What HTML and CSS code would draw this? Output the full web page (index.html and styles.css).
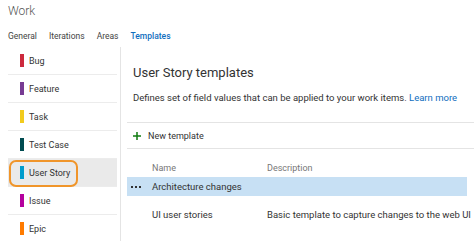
FILE: index.html
```html
<!DOCTYPE html>
<html lang="en">

<head>
    <meta charset="utf8">
    <title>Work - Templates</title>
    <link rel="stylesheet" href="styles.css">
</head>

<body>
    <header class="page-header">
        <h1 class="title">Work</h1>
        <nav class="tabs">
            <a class="tab">General</a>
            <a class="tab">Iterations</a>
            <a class="tab">Areas</a>
            <a class="tab active">Templates</a>
        </nav>
    </header>

    <div class="layout">
        <ul class="types">
            <li class="type"><span class="bar bug"></span>Bug</li>
            <li class="type"><span class="bar feature"></span>Feature</li>
            <li class="type"><span class="bar task"></span>Task</li>
            <li class="type"><span class="bar testcase"></span>Test Case</li>
            <li class="type selected"><span class="bar story"></span>User Story<span class="callout"></span></li>
            <li class="type"><span class="bar issue"></span>Issue</li>
            <li class="type"><span class="bar epic"></span>Epic</li>
        </ul>

        <main class="content">
            <div class="intro">
                <h2 class="heading">User Story templates</h2>
                <p class="lead">Defines set of field values that can be applied to your work items. <a class="link">Learn more</a></p>
            </div>

            <div class="toolbar">
                <span class="plus">
                    <svg width="8" height="8" viewBox="0 0 8 8">
                        <path d="M4 0v8M0 4h8" stroke="#107c10" stroke-width="1.5" />
                    </svg>
                </span>
                New template
            </div>

            <div class="grid">
                <div class="row head">
                    <span class="more"></span>
                    <span class="col-name">Name</span>
                    <span class="col-desc">Description</span>
                </div>
                <div class="row picked">
                    <span class="more"><i></i><i></i><i></i></span>
                    <span class="col-name">Architecture changes</span>
                    <span class="col-desc"></span>
                </div>
                <div class="row">
                    <span class="more"></span>
                    <span class="col-name">UI user stories</span>
                    <span class="col-desc">Basic template to capture changes to the web UI</span>
                </div>
            </div>
        </main>
    </div>
</body>

</html>
```

FILE: styles.css
```css
* {
    box-sizing: border-box;
    margin: 0;
    padding: 0;
}

body {
    background-color: #fff;
    font-family: "Roboto", "Liberation Sans", sans-serif;
    font-size: 9.5px;
    color: #333;
    width: 474px;
    height: 241px;
    overflow: hidden;
}

.page-header {
    padding-left: 8px;
}

.title {
    font-size: 12px;
    font-weight: 300;
    color: #555;
    height: 25px;
    line-height: 23px;
}

.tabs {
    display: flex;
    column-gap: 12px;
    height: 22px;
    line-height: 22px;
    font-size: 8.5px;
}

.tab {
    color: #444;
}

.tab.active {
    color: #106ebe;
    font-weight: 500;
}

.layout {
    display: flex;
    height: 194px;
}

.types {
    list-style: none;
    flex-shrink: 0;
    width: 121px;
    border-right: 1px solid #e4e4e4;
    padding-left: 8px;
}

.type {
    position: relative;
    display: flex;
    align-items: center;
    height: 28px;
    padding-left: 12px;
    margin-right: 3px;
    border-bottom: 1px solid #ececec;
    color: #333;
    font-size: 9px;
}

.type.selected {
    background-color: #eaeaea;
}

.bar {
    width: 4px;
    height: 13px;
    margin-right: 5px;
}

.bug { background-color: #cc293d; }
.feature { background-color: #773b93; }
.task { background-color: #f2cb1d; }
.testcase { background-color: #004b50; }
.story { background-color: #009ccc; }
.issue { background-color: #b4009e; }
.epic { background-color: #ff7b00; }

/* orange annotation around the selected type */
.callout {
    position: absolute;
    left: 1px;
    top: 1px;
    width: 69px;
    height: 27px;
    border: 2px solid #f0952a;
    border-radius: 7px;
}

.content {
    flex-grow: 1;
    min-width: 0;
    padding-left: 6px;
}

.intro {
    padding-left: 6px;
    height: 75px;
}

.heading {
    font-size: 13px;
    font-weight: normal;
    color: #333;
    padding-top: 16px;
    line-height: 20px;
}

.lead {
    margin-top: 7px;
    line-height: 16px;
    color: #333;
    white-space: nowrap;
}

.link {
    color: #106ebe;
}

.toolbar {
    display: flex;
    align-items: center;
    height: 27px;
    border-top: 1px solid #e4e4e4;
    border-bottom: 1px solid #e4e4e4;
    padding-left: 6px;
    color: #333;
    font-size: 9px;
}

.plus {
    display: flex;
    margin-right: 7px;
}

.grid {
    padding-top: 9px;
    margin-right: 7px;
}

.row {
    display: flex;
    align-items: center;
    height: 19px;
    white-space: nowrap;
}

.row.head {
    color: #777;
    font-size: 9px;
}

.row.picked {
    background-color: #c7e0f4;
}

.row.picked + .row {
    margin-top: 9px;
}

.more {
    display: flex;
    flex-shrink: 0;
    column-gap: 2px;
    width: 25px;
    padding-left: 4px;
}

.more i {
    width: 2px;
    height: 2px;
    background-color: #333;
}

.col-name {
    flex-shrink: 0;
    width: 115px;
}
```
